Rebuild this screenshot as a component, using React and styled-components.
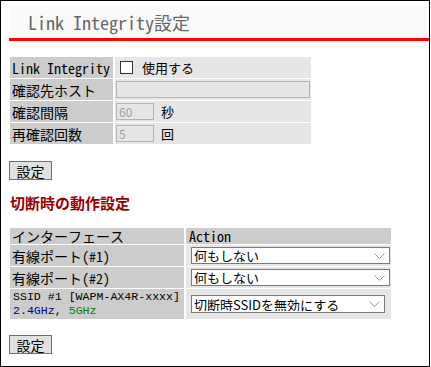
import React from "react";
import styled, { createGlobalStyle } from "styled-components";

const GlobalStyle = createGlobalStyle`
  body {
    margin: 0;
    background: #fff;
    font-family: "Noto Sans Mono CJK JP", "DejaVu Sans Mono", "Noto Sans CJK JP", monospace;
  }
`;

const mono = `"Noto Sans Mono CJK JP", "Liberation Mono", "Noto Sans CJK JP", monospace`;
const gothic = `"Noto Sans CJK JP", "Noto Sans", sans-serif`;

const Frame = styled.div`
  box-sizing: border-box;
  width: 430px;
  height: 367px;
  border: 1px solid #000;
  padding: 5px 0 0 8px;
  display: flex;
  flex-direction: column;
`;

const Header = styled.div`
  height: 32px;
  background: #fafafa;
  border-bottom: 3px solid #ff0000;
  display: flex;
  align-items: center;
  padding-left: 19px;
  font-family: ${mono};
  font-size: 18px;
  font-weight: 300;
  color: #666;
`;

const FormGrid = styled.div`
  display: grid;
  grid-template-columns: ${(p) => p.$cols};
  grid-auto-rows: ${(p) => p.$rows || "21px"};
  column-gap: 2px;
  row-gap: 1px;
  margin: ${(p) => p.$margin};
  width: max-content;
  font-family: ${mono};
  font-size: 14px;
  color: #000;
`;

const Label = styled.div`
  background: #ccc;
  display: flex;
  align-items: center;
  padding-left: 2px;
  white-space: nowrap;
  line-height: 1;
  font-weight: 300;
`;

const Value = styled.div`
  background: ${(p) => (p.$head ? "#ccc" : "#e6e6e6")};
  display: flex;
  align-items: center;
  padding: 0 ${(p) => p.$pad || "1px"};
  gap: 7px;
  font-family: ${(p) => (p.$head ? mono : gothic)};
  font-size: ${(p) => (p.$head ? "14px" : "13px")};
  font-weight: ${(p) => (p.$head ? 300 : 400)};
`;

const Check = styled.input.attrs({ type: "checkbox" })`
  appearance: none;
  margin: 0 2px 0 4px;
  width: 13px;
  height: 13px;
  border: 1px solid #333;
  background: #fff;
  box-sizing: border-box;
`;

const TextBox = styled.input`
  box-sizing: border-box;
  width: ${(p) => p.$w || "100%"};
  height: 17px;
  margin: 0;
  padding: 0 2px;
  border: 1px solid #b4b4b4;
  background: #e6e6e6;
  color: #a0a0a0;
  font-family: ${gothic};
  font-size: 12px;
  outline: none;
`;

const Button = styled.button`
  box-sizing: border-box;
  width: 43px;
  height: 19px;
  margin: ${(p) => p.$margin};
  padding: 0;
  background: #e1e1e1;
  border: 1px solid #707070;
  font-family: ${gothic};
  font-size: 14px;
  line-height: 1;
  color: #000;
`;

const SectionTitle = styled.h2`
  margin: 14px 0 0 1px;
  height: 18px;
  font-family: ${gothic};
  font-size: 15px;
  font-weight: bold;
  color: #990000;
  line-height: 18px;
`;

const SelectWrap = styled.div`
  position: relative;
  width: ${(p) => p.$w};
  margin-left: 4px;
`;

const Select = styled.select`
  appearance: none;
  box-sizing: border-box;
  width: 100%;
  height: ${(p) => p.$h || "17px"};
  margin: 0;
  padding: 0 0 0 2px;
  border: 1px solid #7a7a7a;
  background: #fff;
  font-family: ${gothic};
  font-size: 13px;
  color: #000;
  line-height: 1;
  outline: none;
`;

const Chevron = styled.svg`
  position: absolute;
  right: 5px;
  top: 50%;
  transform: translateY(-50%);
  pointer-events: none;
`;

const SsidLabel = styled(Label)`
  flex-direction: column;
  align-items: flex-start;
  justify-content: center;
  font-family: "Liberation Mono", monospace;
  font-size: 11.6px;
  font-weight: 400;
  line-height: 14px;
  padding-left: 3px;
`;

const Band = styled.span`
  color: ${(p) => p.$color};
`;

const Dropdown = ({ value, w, h }) => (
  <SelectWrap $w={w}>
    <Select $h={h} defaultValue={value}>
      <option>{value}</option>
    </Select>
    <Chevron width="11" height="6" viewBox="0 0 11 6">
      <path d="M0.5 0.5 L5.5 5.5 L10.5 0.5" fill="none" stroke="#9a9a9a" strokeWidth="1" />
    </Chevron>
  </SelectWrap>
);

export default function App() {
  return (
    <>
      <GlobalStyle />
      <Frame>
        <Header>Link Integrity設定</Header>

        <FormGrid $cols="103px 196px" $margin="16px 0 0 1px">
          <Label>Link Integrity</Label>
          <Value>
            <Check />
            使用する
          </Value>
          <Label>確認先ホスト</Label>
          <Value>
            <TextBox disabled />
          </Value>
          <Label>確認間隔</Label>
          <Value>
            <TextBox disabled $w="38px" defaultValue="60" />
            秒
          </Value>
          <Label>再確認回数</Label>
          <Value>
            <TextBox disabled $w="38px" defaultValue="5" />
            回
          </Value>
        </FormGrid>

        <Button $margin="17px 0 0 0">設定</Button>

        <SectionTitle>切断時の動作設定</SectionTitle>

        <FormGrid
          $cols="174px 205px"
          $rows="16px 21px 21px 30px"
          $margin="16px 0 0 1px"
        >
          <Label>インターフェース</Label>
          <Value $head $pad="3px">Action</Value>
          <Label>有線ポート(#1)</Label>
          <Value>
            <Dropdown value="何もしない" w="200px" />
          </Value>
          <Label>有線ポート(#2)</Label>
          <Value>
            <Dropdown value="何もしない" w="200px" />
          </Value>
          <SsidLabel>
            <span>SSID #1 [WAPM-AX4R-xxxx]</span>
            <span>
              <Band $color="#000099">2.4GHz</Band>, <Band $color="#008000">5GHz</Band>
            </span>
          </SsidLabel>
          <Value>
            <Dropdown value="切断時SSIDを無効にする" w="194px" h="18px" />
          </Value>
        </FormGrid>

        <Button $margin="16px 0 0 0">設定</Button>
      </Frame>
    </>
  );
}
